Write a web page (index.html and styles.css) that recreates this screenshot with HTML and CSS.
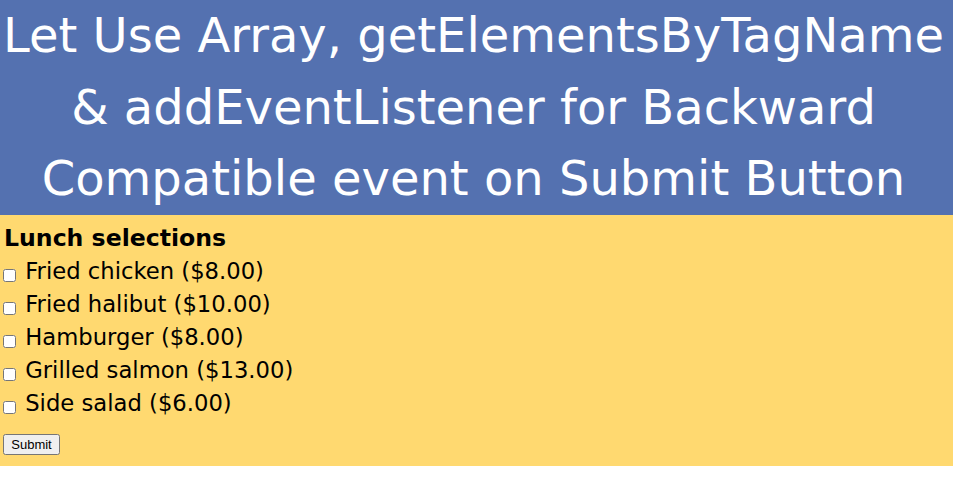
FILE: index.html
```html
<!DOCTYPE html>
<html lang="en">
<head>
    <meta charset="UTF-8">
    <title>Backward Compatible event on Submit Button</title>
    <link rel="stylesheet" href="styles.css">
</head>
<body>
    <div class="page">
        <h1 class="title">Let Use Array, getElementsByTagName<br>&amp; addEventListener for Backward<br>Compatible event on Submit Button</h1>
        <form class="lunch" id="lunchForm">
            <h3 class="lunch-head">Lunch selections</h3>
            <label class="item"><input type="checkbox" name="lunch" value="8"> Fried chicken ($8.00)</label>
            <label class="item"><input type="checkbox" name="lunch" value="10"> Fried halibut ($10.00)</label>
            <label class="item"><input type="checkbox" name="lunch" value="8"> Hamburger ($8.00)</label>
            <label class="item"><input type="checkbox" name="lunch" value="13"> Grilled salmon ($13.00)</label>
            <label class="item"><input type="checkbox" name="lunch" value="6"> Side salad ($6.00)</label>
            <input class="submit" type="submit" value="Submit">
        </form>
    </div>
    <script>
        var form = document.getElementById('lunchForm');
        var btn = form.getElementsByTagName('input');
        function onSubmit(e) {
            if (e && e.preventDefault) e.preventDefault();
        }
        if (form.addEventListener) {
            form.addEventListener('submit', onSubmit, false);
        } else if (form.attachEvent) {
            form.attachEvent('onsubmit', onSubmit);
        }
    </script>
</body>
</html>
```

FILE: styles.css
```css
body { margin: 0; background: #fff; font-family: "DejaVu Sans", Verdana, sans-serif; }
.page { width: 953px; }
.title {
    margin: 0; padding-right: 6px;
    background: #5471b0;
    color: #fff;
    font-size: 48px; font-weight: normal;
    line-height: 71.67px;
    text-align: center;
    white-space: nowrap;
}
.lunch { background: #ffd970; padding: 8px 0 11px; color: #000; }
.lunch-head { margin: 0 0 2px 4px; font-size: 23.6px; line-height: 30px; }
.item { display: block; font-size: 22.7px; line-height: 33px; }
.item input { margin: 0 2px 0 3px; width: 13px; height: 13px; vertical-align: -3px; }
.submit {
    display: block;
    margin: 14px 0 0 3px;
    width: 57px; height: 21px; padding: 0;
    font-family: "Liberation Sans", Arial, sans-serif; font-size: 13px;
}
```
